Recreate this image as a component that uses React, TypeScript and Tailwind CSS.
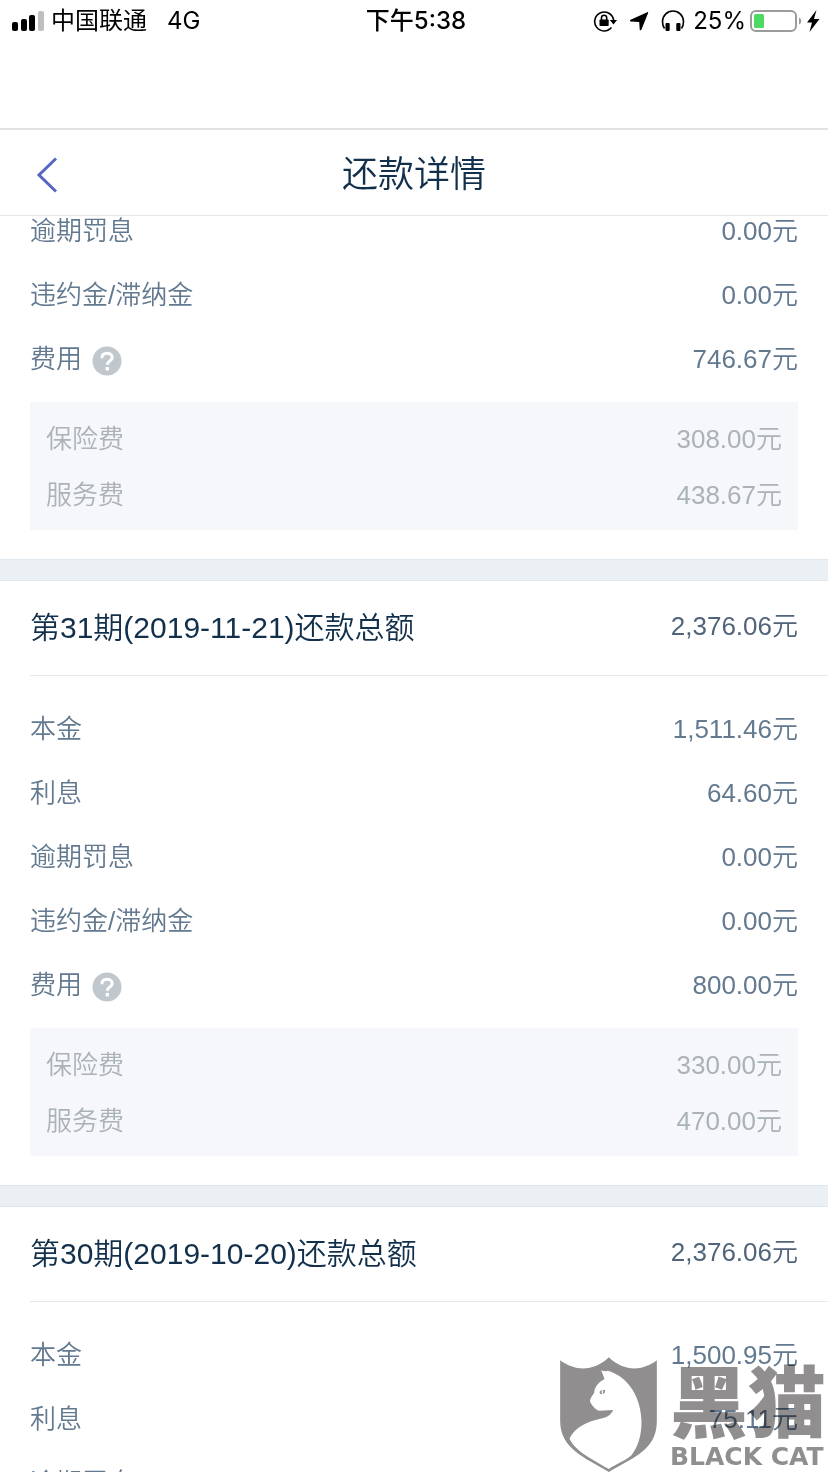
type Fee = { label: string; value: string };

type Period = {
  title?: string;
  total?: string;
  rows: Fee[];
  cost?: string;
  fees?: Fee[];
};

const periods: Period[] = [
  {
    rows: [
      { label: "逾期罚息", value: "0.00元" },
      { label: "违约金/滞纳金", value: "0.00元" },
    ],
    cost: "746.67元",
    fees: [
      { label: "保险费", value: "308.00元" },
      { label: "服务费", value: "438.67元" },
    ],
  },
  {
    title: "第31期(2019-11-21)还款总额",
    total: "2,376.06元",
    rows: [
      { label: "本金", value: "1,511.46元" },
      { label: "利息", value: "64.60元" },
      { label: "逾期罚息", value: "0.00元" },
      { label: "违约金/滞纳金", value: "0.00元" },
    ],
    cost: "800.00元",
    fees: [
      { label: "保险费", value: "330.00元" },
      { label: "服务费", value: "470.00元" },
    ],
  },
  {
    title: "第30期(2019-10-20)还款总额",
    total: "2,376.06元",
    rows: [
      { label: "本金", value: "1,500.95元" },
      { label: "利息", value: "75.11元" },
      { label: "逾期罚息", value: "元" },
    ],
  },
];

function SignalIcon() {
  return (
    <svg className="w-8 h-5" viewBox="0 0 32 20" aria-hidden="true">
      <rect x="0" y="11" width="6" height="9" rx="2" />
      <rect x="9" y="8" width="6" height="12" rx="2" />
      <rect x="17" y="4" width="6" height="16" rx="2" />
      <rect x="26" y="0" width="6" height="20" rx="2" fill="#bfbfbf" />
    </svg>
  );
}

function RotationLockIcon() {
  return (
    <svg className="w-6 h-6" viewBox="0 0 24 24" fill="none" aria-hidden="true">
      <path d="M18.5 18.6A9.5 9.5 0 1 1 20.6 11" stroke="black" strokeWidth="1.6" />
      <path d="M16.8 11H24L20.5 15.5Z" fill="black" />
      <rect x="6.5" y="10.5" width="9.2" height="6.6" rx="0.8" fill="black" />
      <path d="M8.5 11V8.8a2.6 2.6 0 0 1 5.2 0V11" stroke="black" strokeWidth="1.6" />
    </svg>
  );
}

function LocationIcon() {
  return (
    <svg className="w-5 h-5" viewBox="0 0 20 20" aria-hidden="true">
      <path d="M18.2 1.2c.8-.4 1.2.1.9.8L12.5 18.600c-.4 1-1.700.8-1.800-.2L10.200 11 1.800 10.400c-1-.1-1.200-1.200-.2-1.700Z" />
    </svg>
  );
}

function HeadphonesIcon() {
  return (
    <svg className="w-6 h-6" viewBox="0 0 24 24" fill="none" aria-hidden="true">
      <path d="M3.5 19.5C2 17.5 1.5 15 1.5 12.5a10.5 10.5 0 0 1 21 0c0 2.5-.5 5-2 7" stroke="black" strokeWidth="1.6" />
      <rect x="4.5" y="14" width="4.2" height="8" rx="1" fill="black" />
      <rect x="15.3" y="14" width="4.2" height="8" rx="1" fill="black" />
    </svg>
  );
}

function BatteryIcon() {
  return (
    <svg className="w-[52px] h-6" viewBox="0 0 52 24" fill="none" aria-hidden="true">
      <rect x="1" y="2" width="45" height="20" rx="5" stroke="#9b9b9b" strokeWidth="2" />
      <rect x="4" y="5" width="10" height="14" rx="1.5" fill="#4cd964" />
      <path d="M49 8.5c3 1 3 6 0 7Z" fill="#9b9b9b" />
    </svg>
  );
}

function BoltIcon() {
  return (
    <svg className="w-[14px] h-[22px]" viewBox="0 0 14 22" aria-hidden="true">
      <path d="M10.5 0 1 12.500h5L3.500 22 13.500 9H8Z" />
    </svg>
  );
}

function StatusBar() {
  return (
    <div className="h-32 shrink-0 pt-[5px] px-3 font-['Inter','Noto_Sans_CJK_SC',sans-serif] text-2xl leading-8 text-black font-normal">
      <div className="grid grid-cols-[1fr_auto_1fr] items-center h-8">
        <div className="flex items-center">
          <SignalIcon />
          <span className="ml-[7px]">中国联通</span>
          <span className="ml-5">4G</span>
        </div>
        <span className="pl-1 font-medium">下午5:38</span>
        <div className="flex items-center justify-end gap-3 -mr-1">
          <RotationLockIcon />
          <LocationIcon />
          <HeadphonesIcon />
          <span className="-ml-1">25%</span>
          <div className="flex items-center gap-1 -ml-2">
            <BatteryIcon />
            <BoltIcon />
          </div>
        </div>
      </div>
    </div>
  );
}

function Header() {
  return (
    <header className="relative z-10 grid grid-cols-[1fr_auto_1fr] items-center h-[88px] shrink-0 bg-white border-t-2 border-b border-t-[#e2e2e2] border-b-[#e4e6e8]">
      <button type="button" aria-label="返回" className="justify-self-start px-9 pt-1">
        <svg className="w-[22px] h-9" viewBox="0 0 22 36" fill="none" aria-hidden="true">
          <path d="M20 1.5 3 18 20 34.5" stroke="#5566c3" strokeWidth="3" />
        </svg>
      </button>
      <h1 className="pt-1 text-4xl text-[#12304b]">还款详情</h1>
    </header>
  );
}

function Row({ label, value }: Fee) {
  return (
    <div className="flex items-center justify-between h-16">
      <dt>{label}</dt>
      <dd>{value}</dd>
    </div>
  );
}

function HelpButton() {
  return (
    <button type="button" aria-label="费用说明" className="ml-[10px] mt-1">
      <svg className="w-[30px] h-[30px] block" viewBox="0 0 30 30" fill="none" aria-hidden="true">
        <circle cx="15" cy="15" r="14.5" fill="#c0c7cd" />
        <path d="M9.8 12.2C9.8 8.8 12 7.2 15 7.2s5.2 1.6 5.2 4.2c0 3.6-4.900 3.700-4.900 7.300" stroke="white" strokeWidth="3" />
        <rect x="13.6" y="21" width="3.4" height="3.4" fill="white" />
      </svg>
    </button>
  );
}

function PeriodSection({ title, total, rows, cost, fees }: Period) {
  return (
    <section>
      {title && (
        <div className="flex items-center justify-between ml-[30px] pr-[30px] h-[95px] border-b border-[#e3eaed]">
          <h2 className="text-3xl text-[#12304b]">{title}</h2>
          <span className="pb-1 text-[26px] text-[#51647a]">{total}</span>
        </div>
      )}
      <dl className={title ? "px-[30px] pt-[21px] text-[26px] text-[#62798f]" : "px-[30px] text-[26px] text-[#62798f]"}>
        {rows.map((row) => (
          <Row key={row.label} {...row} />
        ))}
        {cost && (
          <div className="flex items-center justify-between h-16">
            <dt className="flex items-center">
              费用
              <HelpButton />
            </dt>
            <dd>{cost}</dd>
          </div>
        )}
      </dl>
      {fees && (
        <dl className="mx-[30px] mt-[11px] mb-[29px] px-4 pt-[9px] pb-[7px] bg-[#f5f7fa] text-[26px] text-[#abb3b7]">
          {fees.map((fee) => (
            <div key={fee.label} className="flex items-center justify-between h-14">
              <dt>{fee.label}</dt>
              <dd>{fee.value}</dd>
            </div>
          ))}
        </dl>
      )}
      {fees && <div className="h-[22px] bg-[#ebf0f4] border-y border-[#dfe6ec]" />}
    </section>
  );
}

function Watermark() {
  return (
    <div className="absolute right-0 bottom-0 z-20 flex items-start gap-[13px] h-[115px] pointer-events-none mix-blend-multiply text-[#908e8f]">
      <svg className="w-[97px] h-[115px]" viewBox="58 80 290 345" aria-hidden="true">
        <path fill="currentColor" d="M58 90C105 125 160 123 204 81 248 123 302 125 348 90V272C348 360 278 380 204 425 132 382 58 355 58 272Z" />
        <path fill="white" d="M181 119Q190 125 201 121C263 139 300 200 302 272 302 320 291 348 272 375 257 390 225 401 204 416 158 389 103 363 86 325 99 297 130 275 187 263 201 260 212 251 217 239L175 241C167 241 154 227 148 215 147 207 150 202 160 188 161 172 170 158 191 146Z" />
        <path fill="currentColor" d="M176 187c1-5 5-8 9-8l-3 5 2 7-4 1ZM187 178l6 2-1 7-7 5 2-6Z" />
      </svg>
      <div className="flex flex-col w-[158px] whitespace-nowrap">
        <span className="font-['Noto_Sans_CJK_SC',sans-serif] font-black text-[78px] leading-[82px]">黑猫</span>
        <span className="font-['DejaVu_Sans',sans-serif] font-bold text-[25px] leading-9">BLACK CAT</span>
      </div>
    </div>
  );
}

export default function App() {
  return (
    <div className="relative flex flex-col h-screen overflow-hidden bg-white font-['Liberation_Sans','Noto_Sans_CJK_SC',sans-serif] font-[350]">
      <StatusBar />
      <Header />
      <main className="flex-1 min-h-0 -mt-[17px]">
        {periods.map((period, i) => (
          <PeriodSection key={i} {...period} />
        ))}
      </main>
      <Watermark />
    </div>
  );
}
